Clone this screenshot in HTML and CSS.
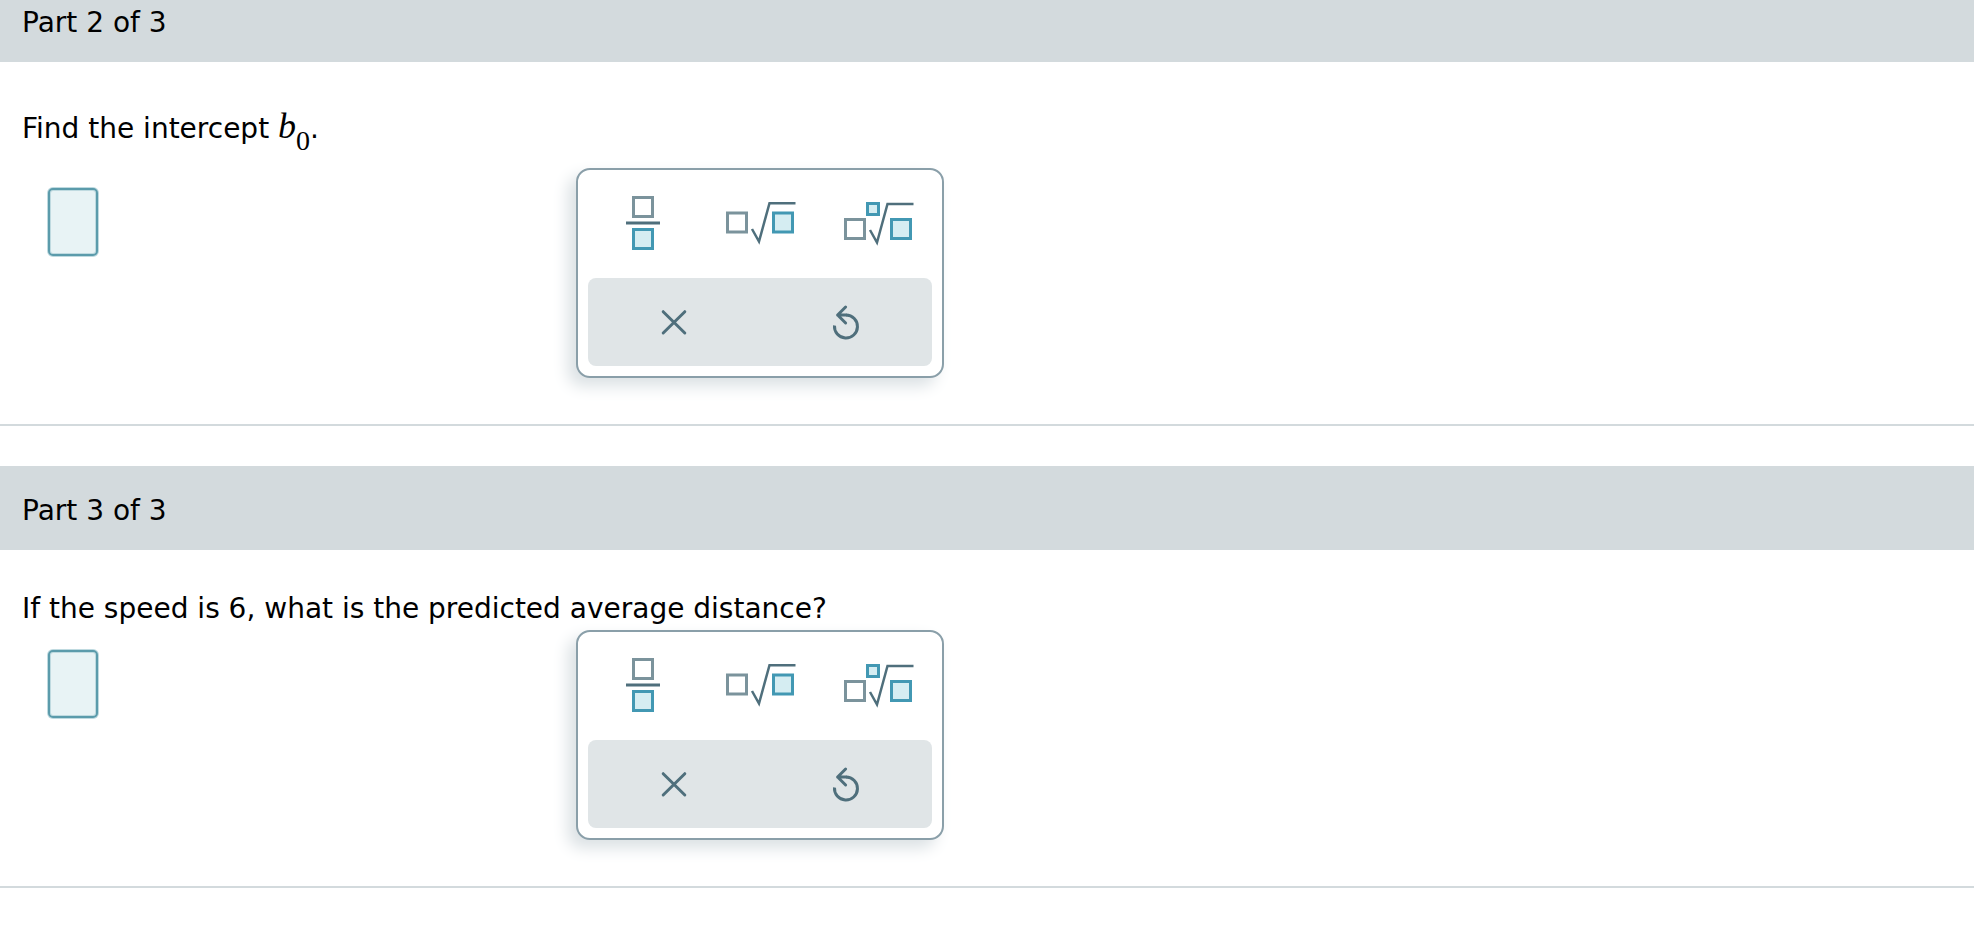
FILE: index.html
```html
<!DOCTYPE html>
<html lang="en">
<head>
<meta charset="utf-8">
<title>Regression line: parts 2 and 3</title>
<link rel="stylesheet" href="styles.css">
</head>
<body>

<!-- shared keypad icons -->
<svg class="defs" aria-hidden="true">
  <symbol id="icon-fraction" viewBox="0 0 72 60">
    <rect class="box" x="27.5" y="3.5" width="19" height="19"/>
    <path class="bar" d="M20 29H54"/>
    <rect class="box filled" x="27.5" y="35.5" width="19" height="19"/>
  </symbol>
  <symbol id="icon-sqrt" viewBox="0 0 72 60">
    <rect class="box" x="3.5" y="19" width="19" height="19"/>
    <path class="root" d="M28 35L35 47.5L45.5 9.2H71.5"/>
    <rect class="box filled" x="49.5" y="19" width="19" height="19"/>
  </symbol>
  <symbol id="icon-nthroot" viewBox="0 0 72 60">
    <rect class="box" x="3.5" y="25.5" width="19" height="19"/>
    <rect class="box filled" x="25.5" y="9.5" width="11" height="11"/>
    <path class="root" d="M28 36L35 48.5L45.5 10H71.5"/>
    <rect class="box filled" x="49.5" y="25.5" width="19" height="19"/>
  </symbol>
  <symbol id="icon-clear" viewBox="0 0 36 36">
    <path class="stroke" d="M7.2 7.7L28.8 29M28.8 7.7L7.2 29"/>
  </symbol>
  <symbol id="icon-undo" viewBox="0 0 36 36">
    <path class="stroke" d="M17.6 3L9.6 11L17.6 19M9.6 11H18"/>
    <path class="stroke flat" d="M6.5 21.5A11.5 11.5 0 1 0 18 11"/>
  </symbol>
</svg>

<section class="part">
  <h2 class="part-title first">Part 2 of 3</h2>
  <label class="question with-math" for="intercept">Find the intercept <span class="math"><i>b</i><sub>0</sub></span>.</label>
  <div class="answer">
    <input class="answer-box" id="intercept" type="text" autocomplete="off">
    <div class="keypad">
      <div class="keys">
        <button type="button" aria-label="Fraction"><svg><use href="#icon-fraction"/></svg></button>
        <button type="button" aria-label="Square root"><svg><use href="#icon-sqrt"/></svg></button>
        <button type="button" aria-label="Nth root"><svg><use href="#icon-nthroot"/></svg></button>
      </div>
      <div class="tray">
        <button type="button" aria-label="Clear"><svg><use href="#icon-clear"/></svg></button>
        <button type="button" aria-label="Undo"><svg><use href="#icon-undo"/></svg></button>
      </div>
    </div>
  </div>
</section>

<section class="part">
  <h2 class="part-title">Part 3 of 3</h2>
  <label class="question" for="distance">If the speed is 6, what is the predicted average distance?</label>
  <div class="answer">
    <input class="answer-box" id="distance" type="text" autocomplete="off">
    <div class="keypad">
      <div class="keys">
        <button type="button" aria-label="Fraction"><svg><use href="#icon-fraction"/></svg></button>
        <button type="button" aria-label="Square root"><svg><use href="#icon-sqrt"/></svg></button>
        <button type="button" aria-label="Nth root"><svg><use href="#icon-nthroot"/></svg></button>
      </div>
      <div class="tray">
        <button type="button" aria-label="Clear"><svg><use href="#icon-clear"/></svg></button>
        <button type="button" aria-label="Undo"><svg><use href="#icon-undo"/></svg></button>
      </div>
    </div>
  </div>
</section>

</body>
</html>
```
FILE: styles.css
```css
* {
  box-sizing: border-box;
}
body {
  margin: 0;
  background: #fff;
  color: #000;
  font-family: Verdana, "DejaVu Sans", sans-serif;
  font-size: 28px;
  line-height: 32px;
}
.defs {
  display: none;
}
.part {
  border-bottom: 2px solid #d3dadd;
  padding-bottom: 46px;
  margin-bottom: 40px;
}
.part-title {
  margin: 0;
  padding: 29px 22px 23px;
  background: #d3dadd;
  font-size: 28px;
  font-weight: normal;
}
.part-title.first {
  padding-top: 7px;
}
.question {
  display: block;
  padding: 43px 22px 5px;
}
.question.with-math {
  padding-top: 51px;
  padding-bottom: 23px;
}
.math {
  font-family: "Liberation Serif", "Times New Roman", serif;
  font-size: 36px;
  line-height: 0;
}
.math sub {
  font-size: 28px;
  line-height: 0;
  vertical-align: -12px;
}

/* answer box with its keypad to the right */
.answer {
  display: grid;
  grid-template-columns: 528px 368px;
  align-items: start;
  padding-left: 48px;
}
.answer-box {
  width: 50px;
  height: 68px;
  margin: 20px 0 0;
  padding: 0 6px;
  border: 2px solid #5b9bab;
  border-radius: 5px;
  background: #e8f3f5;
  box-shadow: 0 0 0 1px #bfdae0, inset 0 0 0 1px #bfdae0;
  font: inherit;
}
.keypad {
  padding: 0 10px 10px;
  border: 2px solid #8a9fa9;
  border-radius: 14px;
  background: #fff;
  box-shadow: -8px 8px 16px #dbe1e4;
}
.keys {
  display: grid;
  grid-template-columns: repeat(3, 1fr);
  height: 108px;
  margin: 0 -5px;
}
.tray {
  display: grid;
  grid-template-columns: repeat(2, 1fr);
  height: 88px;
  border-radius: 8px;
  background: #e0e5e7;
}
.keypad button {
  display: flex;
  align-items: center;
  justify-content: center;
  padding: 0;
  border: 0;
  background: none;
  cursor: pointer;
}
.keys svg {
  width: 72px;
  height: 60px;
}
.tray svg {
  width: 36px;
  height: 36px;
}
.box {
  fill: #fff;
  stroke: #7b939c;
  stroke-width: 3;
}
.box.filled {
  fill: #d5edf2;
  stroke: #4298b3;
}
.bar {
  stroke: #4f6f7c;
  stroke-width: 3;
}
.root {
  fill: none;
  stroke: #4f6f7c;
  stroke-width: 2.5;
}
.stroke {
  fill: none;
  stroke: #4f6f7c;
  stroke-width: 3;
  stroke-linecap: round;
  stroke-linejoin: round;
}
.stroke.flat {
  stroke-linecap: butt;
}
```
